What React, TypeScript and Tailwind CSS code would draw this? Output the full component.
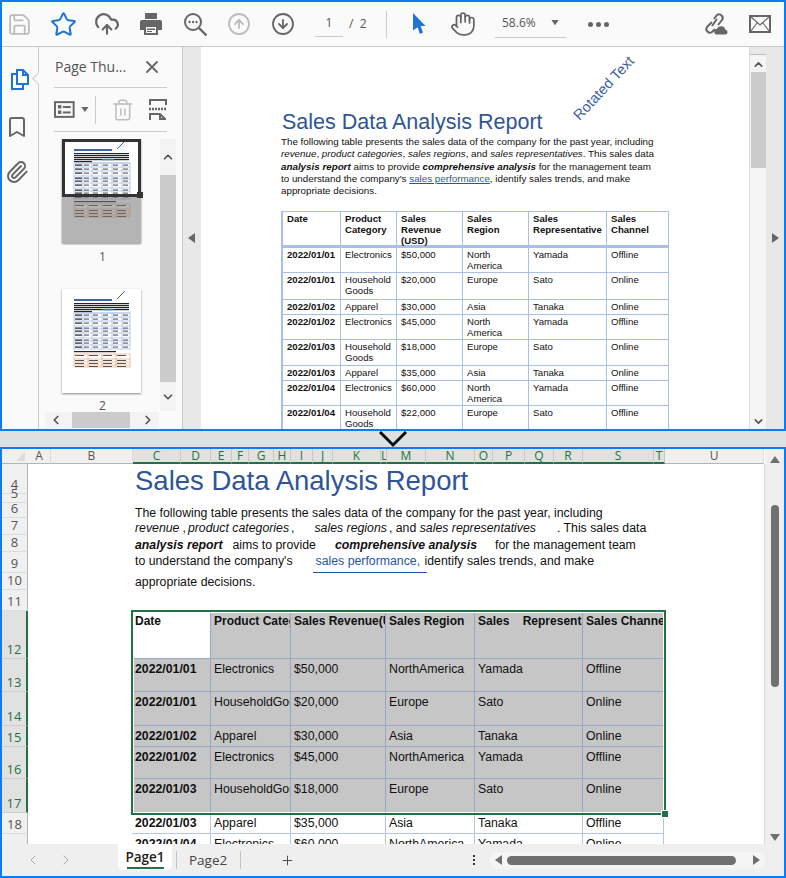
import type { ReactNode } from "react";
import {
  Bookmark,
  ChevronDown,
  ChevronLeft,
  ChevronRight,
  ChevronUp,
  CircleArrowDown,
  CircleArrowUp,
  CloudUpload,
  Hand,
  Paperclip,
  Plus,
  Save,
  Star,
  Trash2,
  X,
} from "lucide-react";

const pdfRows = [
  { h: "h-[25px]", d: "2022/01/01", c: "Electronics", r: "$50,000", g: "North\nAmerica", p: "Yamada", s: "Offline" },
  { h: "h-[27px]", d: "2022/01/01", c: "Household\nGoods", r: "$20,000", g: "Europe", p: "Sato", s: "Online" },
  { h: "h-[15px]", d: "2022/01/02", c: "Apparel", r: "$30,000", g: "Asia", p: "Tanaka", s: "Online" },
  { h: "h-[25px]", d: "2022/01/02", c: "Electronics", r: "$45,000", g: "North\nAmerica", p: "Yamada", s: "Offline" },
  { h: "h-[26px]", d: "2022/01/03", c: "Household\nGoods", r: "$18,000", g: "Europe", p: "Sato", s: "Online" },
  { h: "h-[15px]", d: "2022/01/03", c: "Apparel", r: "$35,000", g: "Asia", p: "Tanaka", s: "Online" },
  { h: "h-[25px]", d: "2022/01/04", c: "Electronics", r: "$60,000", g: "North\nAmerica", p: "Yamada", s: "Offline" },
  { h: "h-[27px]", d: "2022/01/04", c: "Household\nGoods", r: "$22,000", g: "Europe", p: "Sato", s: "Offline" },
];

const pdfCols = ["w-[58px]", "w-[56px]", "w-[66px]", "w-[66px]", "w-[78px]", "w-[63px]"];

const columns = [
  { n: "A", w: "w-[23px]", sel: false },
  { n: "B", w: "w-[82px]", sel: false },
  { n: "C", w: "w-[48px]", sel: true },
  { n: "D", w: "w-[30px]", sel: true },
  { n: "E", w: "w-[21px]", sel: true },
  { n: "F", w: "w-[17px]", sel: true },
  { n: "G", w: "w-[25px]", sel: true },
  { n: "H", w: "w-[17px]", sel: true },
  { n: "I", w: "w-[22px]", sel: true },
  { n: "J", w: "w-[20px]", sel: true },
  { n: "K", w: "w-[48px]", sel: true },
  { n: "L", w: "w-[6px]", sel: true },
  { n: "M", w: "w-[39px]", sel: true },
  { n: "N", w: "w-[49px]", sel: true },
  { n: "O", w: "w-[18px]", sel: true },
  { n: "P", w: "w-[32px]", sel: true },
  { n: "Q", w: "w-[29px]", sel: true },
  { n: "R", w: "w-[29px]", sel: true },
  { n: "S", w: "w-[71px]", sel: true },
  { n: "T", w: "w-[11px]", sel: true },
  { n: "U", w: "w-[99px]", sel: false },
];

const sheetCols = ["w-[79px]", "w-[80px]", "w-[95px]", "w-[89px]", "w-[108px]", "w-[81px]"];

function ToolSlot({ children, className = "" }: { children: ReactNode; className?: string }) {
  return <div className={`w-[44px] h-full flex items-center justify-center shrink-0 ${className}`}>{children}</div>;
}

function PrinterIcon() {
  return (
    <svg width="24" height="24" viewBox="0 0 24 24" fill="#666">
      <path d="M6 1h12v6H6z" />
      <path fillRule="evenodd" d="M3 8h18a2 2 0 0 1 2 2v8h-4v5H5v-5H1v-8a2 2 0 0 1 2-2zM7 15v6h10v-6zm1 1.5h8V18H8zm0 2.5h5v1H8z" />
    </svg>
  );
}

function ZoomDots() {
  return (
    <svg width="25" height="25" viewBox="0 0 25 25" fill="none" stroke="#666" strokeWidth="2">
      <circle cx="10" cy="10" r="8" />
      <path d="M16 16l7.5 7.5" strokeWidth="2.4" />
      <g fill="#666" stroke="none">
        <circle cx="6.5" cy="10" r="1.2" />
        <circle cx="10" cy="10" r="1.2" />
        <circle cx="13.5" cy="10" r="1.2" />
      </g>
    </svg>
  );
}

function CursorIcon() {
  return (
    <svg width="14" height="22" viewBox="0 0 14 22" fill="#1f74d2">
      <path d="M1 0l12.5 13H8.6l2.4 6.6-3 1.4-2.4-6.8L1 17.5z" />
    </svg>
  );
}

function LinkCloud() {
  return (
    <svg width="26" height="24" viewBox="0 0 26 24" fill="none" stroke="#666" strokeWidth="2">
      <path d="M9 10l-5 5a3.6 3.6 0 0 0 5 5l3-3" />
      <path d="M9 14l5-7" />
      <path d="M11 7l3-4a3.6 3.6 0 0 1 5 5l-4 5" />
      <path d="M13 22.5a3 3 0 0 1 1-5.8 4.5 4.5 0 0 1 8.4 1 2.5 2.5 0 0 1 .6 4.8z" fill="#666" stroke="none" />
    </svg>
  );
}

function MailIcon() {
  return (
    <svg width="22" height="18" viewBox="0 0 22 18" fill="none" stroke="#666">
      <rect x="1" y="1" width="20" height="16" strokeWidth="2" />
      <path d="M1.5 1.5L11 10l9.5-8.5M1.5 16.5L8 8M20.5 16.5L14 8" strokeWidth="1.2" />
    </svg>
  );
}

function PagesIcon() {
  return (
    <svg width="20" height="22" viewBox="0 0 20 22" fill="none" stroke="#1f74d2" strokeWidth="2">
      <path d="M7 2h6l5 5v9H7z" />
      <path d="M13 2v5h5" />
      <path d="M7 6H2v15h11v-5" />
    </svg>
  );
}

function ListOptions() {
  return (
    <svg width="21" height="17" viewBox="0 0 21 17" fill="none" stroke="#666" strokeWidth="2">
      <rect x="1" y="1" width="19" height="15" />
      <g fill="#666" stroke="none">
        <rect x="4" y="4" width="3.5" height="3.5" />
        <rect x="4" y="9.5" width="3.5" height="3.5" />
        <rect x="9" y="5" width="8" height="2" />
        <rect x="9" y="10.5" width="8" height="2" />
      </g>
    </svg>
  );
}

function ExtractIcon() {
  return (
    <svg width="18" height="22" viewBox="0 0 18 22" fill="none" stroke="#666" strokeWidth="2">
      <path d="M1 6V1h16v5" />
      <path d="M0 10h18" strokeDasharray="2 1" strokeWidth="2.5" />
      <path d="M1 21v-6h10l5 5v1M11 15v5h5" />
    </svg>
  );
}

function Triangle({ dir, className = "" }: { dir: "l" | "r" | "u" | "d"; className?: string }) {
  const points = {
    l: "7,0 7,10 0,5",
    r: "0,0 0,10 7,5",
    u: "0,7 10,7 5,0",
    d: "0,0 10,0 5,7",
  }[dir];
  const size = dir === "l" || dir === "r" ? { w: 7, h: 10 } : { w: 10, h: 7 };
  return (
    <svg width={size.w} height={size.h} viewBox={`0 0 ${size.w} ${size.h}`} className={className}>
      <polygon points={points} fill="currentColor" />
    </svg>
  );
}

function Toolbar() {
  return (
    <div className="h-[45px] shrink-0 bg-[#fafafa] border-b border-[#c8c8c8] flex items-center">
      <ToolSlot className="-ml-[5px]">
        <Save size={25} strokeWidth={1.7} className="text-[#bcbcbc]" />
      </ToolSlot>
      <ToolSlot>
        <Star size={27} strokeWidth={1.8} className="text-[#1f74d2]" />
      </ToolSlot>
      <ToolSlot>
        <CloudUpload size={26} strokeWidth={2} className="text-[#666]" />
      </ToolSlot>
      <ToolSlot>
        <PrinterIcon />
      </ToolSlot>
      <ToolSlot>
        <ZoomDots />
      </ToolSlot>
      <ToolSlot>
        <CircleArrowUp size={24} strokeWidth={1.8} className="text-[#bcbcbc]" />
      </ToolSlot>
      <ToolSlot>
        <CircleArrowDown size={24} strokeWidth={1.8} className="text-[#666]" />
      </ToolSlot>
      <div className="ml-[10px] w-[28px] h-[21px] mt-[4px] border-b border-[#c8c8c8] text-center text-[12px] leading-[14px] text-[#555]">
        1
      </div>
      <div className="ml-[6px] w-[37px] text-[12px] text-[#555] whitespace-pre">/  2</div>
      <div className="w-px h-[27px] bg-[#ccc]" />
      <ToolSlot className="ml-[10px]">
        <CursorIcon />
      </ToolSlot>
      <ToolSlot>
        <Hand size={26} strokeWidth={1.6} className="text-[#666]" />
      </ToolSlot>
      <div className="ml-[10px] w-[71px] h-[25px] mt-[2px] pb-[4px] border-b border-[#c8c8c8] flex items-center justify-between pl-[7px] pr-[6px] text-[12px] text-[#555]">
        <span>58.6%</span>
        <Triangle dir="d" className="text-[#666] scale-75" />
      </div>
      <ToolSlot className="ml-[10px]">
        <div className="flex gap-[3px]">
          <div className="w-[5px] h-[5px] rounded-full bg-[#666]" />
          <div className="w-[5px] h-[5px] rounded-full bg-[#666]" />
          <div className="w-[5px] h-[5px] rounded-full bg-[#666]" />
        </div>
      </ToolSlot>
      <ToolSlot className="ml-auto">
        <LinkCloud />
      </ToolSlot>
      <ToolSlot className="mr-[2px]">
        <MailIcon />
      </ToolSlot>
    </div>
  );
}

function Rail() {
  return (
    <div className="w-[37px] shrink-0 bg-[#fafafa] border-r border-[#c8c8c8] relative flex flex-col items-center pt-[21px]">
      <PagesIcon />
      <Bookmark size={24} strokeWidth={2} className="text-[#666] mt-[25px] -ml-[6px]" />
      <Paperclip size={24} strokeWidth={2} className="text-[#666] mt-[21px] -ml-[6px]" />
      <div className="absolute right-[-5px] top-[27px] w-[9px] h-[9px] rotate-45 bg-[#fafafa] border-l border-b border-[#c8c8c8]" />
    </div>
  );
}

function ThumbArt() {
  const rowY = [0, 4, 8, 13, 16, 20, 25, 28, 32];
  const colX = [12, 21, 30, 40, 50, 60];
  return (
    <svg width="79" height="104" viewBox="0 0 79 104">
      <rect x="12" y="10" width="38" height="2" fill="#3f63a8" />
      <path d="M55 10l8-8" stroke="#3f63a8" strokeWidth="1" />
      {[14, 16, 18, 20, 22].map((y) => (
        <rect key={y} x="12" y={y} width={y === 22 ? 18 : 55} height="1.2" fill="#222" />
      ))}
      <rect x="40" y="20" width="12" height="1.2" fill="#1f74d2" />
      <g stroke="#a9bfe6" strokeWidth="0.8" fill="none">
        <rect x="12" y="24" width="56" height="36" />
        {rowY.map((y) => (
          <path key={y} d={`M12 ${24 + y}h56`} />
        ))}
        <path d="M21 24v36M30 24v36M40 24v36M50 24v36M60 24v36" />
      </g>
      {rowY.map((y) =>
        colX.map((x, i) => (
          <rect key={`${x}-${y}`} x={x + 1} y={25.5 + y} width={i === 0 ? 7 : 5} height="1.2" fill={i === 0 ? "#222" : "#666"} />
        )),
      )}
      <rect x="12" y="62" width="42" height="1.2" fill="#222" />
      <g stroke="#eab48e" strokeWidth="0.8" fill="none">
        <rect x="12" y="65" width="56" height="13" />
        <path d="M12 70h56M12 73h56M12 76h56M26 65v13M40 65v13M54 65v13" />
      </g>
      {[66, 71, 74, 77].map((y) =>
        [13, 27, 41, 55].map((x) => <rect key={`${x}-${y}`} x={x} y={y} width="9" height="1" fill="#555" />),
      )}
    </svg>
  );
}

function ThumbnailPanel() {
  return (
    <div className="w-[144px] shrink-0 bg-[#fafafa] border-r border-[#c8c8c8] flex flex-col font-['Open_Sans',sans-serif]">
      <div className="mx-[15px] h-[41px] shrink-0 border-b border-[#ccc] flex items-center justify-between pr-[5px]">
        <span className="text-[14px] text-[#555] -mt-[1px] ml-[1px]">Page Thu...</span>
        <X size={20} strokeWidth={2.2} className="text-[#666]" />
      </div>
      <div className="mx-[15px] h-[44px] shrink-0 border-b border-[#ccc] flex items-center">
        <ListOptions />
        <Triangle dir="d" className="ml-[5px] text-[#666] scale-75" />
        <div className="ml-[6px] w-px h-[28px] bg-[#ccc]" />
        <Trash2 size={24} strokeWidth={1.5} className="ml-[15px] text-[#bcbcbc]" />
        <div className="ml-[14px]">
          <ExtractIcon />
        </div>
      </div>
      <div className="flex-1 min-h-0 flex flex-col pt-[7px]">
        <div className="h-[273px] shrink-0 flex pl-[6px] overflow-hidden">
          <div className="w-[115px] flex flex-col items-center">
            <div className="relative -ml-[2px] bg-white shadow-[0_1px_2px_#888]">
              <ThumbArt />
              <div className="absolute inset-x-0 bottom-0 top-[56px] bg-[#777]/55" />
              <div className="absolute left-0 top-0 w-full h-[58px] border-[3px] border-[#333]" />
              <div className="absolute right-[-2px] top-[53px] w-[6px] h-[6px] bg-[#333]" />
            </div>
            <div className="mt-[7px] text-[12px] leading-[14px] text-[#555]">1</div>
            <div className="mt-[25px] -ml-[2px] bg-white shadow-[0_1px_2px_#888]">
              <ThumbArt />
            </div>
            <div className="mt-[6px] text-[12px] leading-[14px] text-[#555]">2</div>
          </div>
          <div className="w-[16px] h-[272px] flex flex-col bg-[#f3f3f3] shrink-0">
            <div className="h-[36px] flex items-center justify-center">
              <ChevronUp size={14} strokeWidth={3} className="text-[#555]" />
            </div>
            <div className="h-[207px] bg-[#cbcbcb]" />
            <div className="flex-1 flex items-center justify-center">
              <ChevronDown size={14} strokeWidth={3} className="text-[#555]" />
            </div>
          </div>
        </div>
        <div className="ml-[6px] w-[114px] h-[16px] shrink-0 bg-[#f3f3f3] flex items-center justify-between px-[4px] relative">
          <ChevronLeft size={14} strokeWidth={3} className="text-[#555]" />
          <div className="absolute left-[27px] top-0 w-[58px] h-full bg-[#cbcbcb]" />
          <ChevronRight size={14} strokeWidth={3} className="text-[#555]" />
        </div>
      </div>
    </div>
  );
}

function PdfTable() {
  return (
    <div className="w-[388px] border-l-2 border-t border-r border-[#aabfe6] text-[9.6px] leading-[11px] text-[#111]">
      <div className="flex h-[36px] font-bold border-b-[3px] border-[#aabfe6]">
        {["Date", "Product\nCategory", "Sales\nRevenue\n(USD)", "Sales\nRegion", "Sales\nRepresentative", "Sales\nChannel"].map(
          (t, i) => (
            <div
              key={t}
              className={`${pdfCols[i]} shrink-0 pl-[4px] pt-[1px] whitespace-pre-line border-r border-[#aabfe6] last:border-r-0`}
            >
              {t}
            </div>
          ),
        )}
      </div>
      {pdfRows.map((row, i) => (
        <div key={i} className={`flex ${row.h} border-b border-[#aabfe6]`}>
          {[row.d, row.c, row.r, row.g, row.p, row.s].map((t, j) => (
            <div
              key={j}
              className={`${pdfCols[j]} shrink-0 pl-[4px] pt-[1px] whitespace-pre-line border-r border-[#aabfe6] last:border-r-0 ${j === 0 ? "font-bold" : ""}`}
            >
              {t}
            </div>
          ))}
        </div>
      ))}
    </div>
  );
}

function PdfPage() {
  return (
    <div className="flex-1 min-w-0 bg-white overflow-hidden relative pl-[80px] pt-[62px] font-['Liberation_Sans',Arial,sans-serif]">
      <div className="ml-[1px] text-[21.5px] leading-[27px] text-[#2f5597] whitespace-nowrap">Sales Data Analysis Report</div>
      <div className="text-[9.8px] leading-[12.3px] text-[#111] whitespace-nowrap">
        <div>The following table presents the sales data of the company for the past year, including</div>
        <div>
          <i>revenue</i>, <i>product categories</i>, <i>sales regions</i>, and <i>sales representatives</i>. This sales data
        </div>
        <div>
          <b>
            <i>analysis report</i>
          </b>{" "}
          aims to provide{" "}
          <b>
            <i>comprehensive analysis</i>
          </b>{" "}
          for the management team
        </div>
        <div>
          to understand the company's <span className="text-[#1f55b5] underline">sales performance</span>, identify sales
          trends, and make
        </div>
        <div>appropriate decisions.</div>
      </div>
      <div className="mt-[14px]">
        <PdfTable />
      </div>
      <div className="absolute left-[362px] top-[33px] -rotate-[47deg] text-[14.5px] leading-[16px] text-[#3b5ea6] whitespace-nowrap">
        Rotated Text
      </div>
    </div>
  );
}

function PdfWindow() {
  return (
    <div className="h-[431px] shrink-0 border-2 border-[#0a7cf5] bg-white flex flex-col font-['Open_Sans',sans-serif]">
      <Toolbar />
      <div className="flex-1 min-h-0 flex">
        <Rail />
        <ThumbnailPanel />
        <div className="w-[18px] shrink-0 bg-[#e8e8e8] flex items-center justify-center">
          <Triangle dir="l" className="text-[#666] -ml-[1px]" />
        </div>
        <PdfPage />
        <div className="w-[17px] shrink-0 bg-[#f5f5f5] border-l border-[#ddd] flex flex-col items-center">
          <div className="w-full h-[8px] border-b border-[#bbb] bg-[#e8e8e8]" />
          <div className="h-[16px] mt-[1px] flex items-center">
            <ChevronUp size={13} strokeWidth={3} className="text-[#555]" />
          </div>
          <div className="w-[15px] h-[96px] bg-[#cbcbcb]" />
          <div className="mt-auto h-[16px] flex items-center">
            <ChevronDown size={13} strokeWidth={3} className="text-[#555]" />
          </div>
        </div>
        <div className="w-[18px] shrink-0 bg-[#e8e8e8] flex items-center justify-center">
          <Triangle dir="r" className="text-[#666] ml-[1px]" />
        </div>
      </div>
    </div>
  );
}

function SheetRow({
  n,
  h,
  sel = false,
  children,
}: {
  n: number;
  h: string;
  sel?: boolean;
  children?: ReactNode;
}) {
  return (
    <div className={`flex ${h} shrink-0`}>
      <div
        className={`w-[26px] shrink-0 flex items-end justify-center text-[13px] leading-[17px] border-b font-['Open_Sans',sans-serif] ${
          sel
            ? "bg-[#e1e1e1] text-[#217346] border-[#cfcfcf] border-r-2 border-r-[#217346]"
            : "bg-[#f0f0f0] text-[#555] border-[#dcdcdc] border-r border-r-[#b4b4b4]"
        }`}
      >
        {n}
      </div>
      <div className="flex-1 min-w-0 pl-[107px] whitespace-nowrap">{children}</div>
    </div>
  );
}

function TableCells({ cells, selected, first = false }: { cells: string[]; selected: boolean; first?: boolean }) {
  return (
    <div className={`flex h-full -ml-[3px] w-[533px] leading-[14px] text-[#111] ${first ? "text-[12px]" : "text-[12.3px]"}`}>
      {cells.map((t, i) => (
        <div
          key={i}
          className={`${sheetCols[i]} shrink-0 overflow-hidden whitespace-pre pl-[3px] pt-[3px] border-b border-r ${
            selected ? "border-[#95a8c8]" : "border-[#b4c6e7]"
          } ${selected && !(first && i === 0) ? "bg-[#c6c6c6]" : "bg-white"} ${first || i === 0 ? "font-bold" : ""}`}
        >
          {t}
        </div>
      ))}
    </div>
  );
}

function SheetWindow() {
  const line = "text-[12.3px] leading-[16px] text-[#111] flex items-end h-full";
  return (
    <div className="flex-1 min-h-0 border-2 border-[#0a7cf5] bg-[#efefef] flex flex-col font-['Liberation_Sans',Arial,sans-serif]">
      <div className="flex-1 min-h-0 flex">
        <div className="w-[763px] shrink-0 flex flex-col relative overflow-hidden bg-white">
          <div className="h-[15px] shrink-0 flex text-[12px] leading-[14px] font-['Open_Sans',sans-serif]">
            <div className="w-[26px] shrink-0 bg-[#f0f0f0] border-b border-[#b4b4b4] relative">
              <div className="absolute right-[3px] bottom-[2px] w-0 h-0 border-l-[9px] border-l-transparent border-b-[9px] border-b-[#dcdcdc]" />
            </div>
            {columns.map((c) => (
              <div
                key={c.n}
                className={`${c.w} shrink-0 overflow-hidden text-center ${
                  c.sel
                    ? "bg-[#e1e1e1] text-[#217346] border-b-2 border-[#217346] border-r border-r-[#c8c8c8]"
                    : "bg-[#f0f0f0] text-[#555] border-b border-[#b4b4b4] border-r border-r-[#dcdcdc]"
                }`}
              >
                {c.n}
              </div>
            ))}
          </div>
          <div className="flex-1 min-h-0 overflow-hidden flex flex-col border-r border-[#d8d8d8]">
            <SheetRow n={4} h="h-[30px]">
              <div className="text-[27.5px] leading-[30px] text-[#2f5597] h-full flex items-end translate-y-[2px]">
                Sales Data Analysis Report
              </div>
            </SheetRow>
            <SheetRow n={5} h="h-[9px]" />
            <SheetRow n={6} h="h-[15px]">
              <div className={`${line} translate-y-[3px]`}>
                The following table presents the sales data of the company for the past year, including
              </div>
            </SheetRow>
            <SheetRow n={7} h="h-[17px]">
              <div className={`${line} translate-y-[1px]`}>
                <i>revenue</i>
                <span className="ml-[3px]">,</span>
                <i className="ml-[2px]">product categories</i>
                <span className="ml-[2px]">,</span>
                <i className="ml-[20px]">sales regions</i>
                <span className="ml-[2px] whitespace-pre">, and </span>
                <i>sales representatives</i>
                <span className="ml-[21px]">. This sales data</span>
              </div>
            </SheetRow>
            <SheetRow n={8} h="h-[17px]">
              <div className={`${line} translate-y-[1px]`}>
                <b>
                  <i>analysis report</i>
                </b>
                <span className="ml-[10px]">aims to provide</span>
                <b className="ml-[19px]">
                  <i>comprehensive analysis</i>
                </b>
                <span className="ml-[18px]">for the management team</span>
              </div>
            </SheetRow>
            <SheetRow n={9} h="h-[21px]">
              <div className="text-[12.3px] leading-[16px] text-[#111] flex h-full items-start pt-[1px]">
                <span>to understand the company's</span>
                <span className="ml-[20px] pl-[3px] pr-[7px] h-[20px] border-b border-[#1f55b5] text-[#1f55b5]">
                  sales performance,
                </span>
                <span className="-ml-[6px] whitespace-pre"> identify sales trends, and make</span>
              </div>
            </SheetRow>
            <SheetRow n={10} h="h-[17px]">
              <div className={line}>appropriate decisions.</div>
            </SheetRow>
            <SheetRow n={11} h="h-[21px]" />
            <SheetRow n={12} h="h-[48px]" sel>
              <TableCells
                selected
                first
                cells={["Date", "Product Category", "Sales Revenue(USD)", "Sales Region", "Sales    Representative", "Sales Channel"]}
              />
            </SheetRow>
            <SheetRow n={13} h="h-[33px]" sel>
              <TableCells selected cells={["2022/01/01", "Electronics", "$50,000", "NorthAmerica", "Yamada", "Offline"]} />
            </SheetRow>
            <SheetRow n={14} h="h-[34px]" sel>
              <TableCells selected cells={["2022/01/01", "HouseholdGoods", "$20,000", "Europe", "Sato", "Online"]} />
            </SheetRow>
            <SheetRow n={15} h="h-[21px]" sel>
              <TableCells selected cells={["2022/01/02", "Apparel", "$30,000", "Asia", "Tanaka", "Online"]} />
            </SheetRow>
            <SheetRow n={16} h="h-[32px]" sel>
              <TableCells selected cells={["2022/01/02", "Electronics", "$45,000", "NorthAmerica", "Yamada", "Offline"]} />
            </SheetRow>
            <SheetRow n={17} h="h-[34px]" sel>
              <TableCells selected cells={["2022/01/03", "HouseholdGoods", "$18,000", "Europe", "Sato", "Online"]} />
            </SheetRow>
            <SheetRow n={18} h="h-[21px]">
              <TableCells selected={false} cells={["2022/01/03", "Apparel", "$35,000", "Asia", "Tanaka", "Offline"]} />
            </SheetRow>
            <SheetRow n={19} h="h-[33px]">
              <TableCells selected={false} cells={["2022/01/04", "Electronics", "$60,000", "NorthAmerica", "Yamada", "Online"]} />
            </SheetRow>
          </div>
          {/* selection frame over the cells */}
          <div className="absolute left-[129px] top-[161px] w-[535px] h-[205px] border-2 border-[#217346] shadow-[inset_0_0_0_1px_#fff]">
            <div className="absolute right-[-4px] bottom-[-4px] w-[6px] h-[6px] bg-[#217346] outline outline-1 outline-white" />
          </div>
        </div>
        <div className="flex-1 flex flex-col items-center pt-[7px] pb-[3px] text-[#707070]">
          <Triangle dir="u" />
          <div className="mt-[42px] w-[8px] h-[182px] rounded-full bg-[#707070]" />
          <Triangle dir="d" className="mt-auto" />
        </div>
      </div>
      <div className="h-[32px] shrink-0 flex items-center text-[13.5px] leading-[18px] font-['Open_Sans',sans-serif] text-[#444]">
        <ChevronLeft size={16} strokeWidth={1.5} className="ml-[23px] text-[#aaa]" />
        <ChevronRight size={16} strokeWidth={1.5} className="ml-[17px] text-[#aaa]" />
        <div className="ml-[44px] w-[54px] h-[26px] -mt-[6px] bg-white rounded-b-[5px] flex flex-col items-center justify-end font-semibold">
          <span className="text-[#222]">Page1</span>
          <div className="w-[37px] h-[2px] mt-[1px] mb-[1px] bg-[#217346]" />
        </div>
        <div className="ml-[4px] w-px h-[18px] bg-[#c4c4c4]" />
        <span className="ml-[12px]">Page2</span>
        <div className="ml-[13px] w-px h-[18px] bg-[#c4c4c4]" />
        <Plus size={15} strokeWidth={1.5} className="ml-[39px] text-[#444]" />
        <div className="ml-[178px] flex flex-col gap-[2px]">
          <div className="w-[2px] h-[2px] bg-[#333]" />
          <div className="w-[2px] h-[2px] bg-[#333]" />
          <div className="w-[2px] h-[2px] bg-[#333]" />
        </div>
        <div className="ml-[15px] w-[275px] h-[17px] rounded-full bg-[#f5f5f5] flex items-center px-[5px] text-[#707070]">
          <Triangle dir="l" />
          <div className="ml-[5px] w-[229px] h-[9px] rounded-full bg-[#707070]" />
          <Triangle dir="r" className="ml-auto" />
        </div>
      </div>
    </div>
  );
}

export default function App() {
  return (
    <div className="w-[786px] h-[878px] overflow-hidden relative flex flex-col bg-[#e0e0e0]">
      <PdfWindow />
      <div className="h-[16px] shrink-0" />
      <SheetWindow />
      <svg className="absolute left-[378px] top-[430px]" width="30" height="18" viewBox="0 0 30 18" fill="none">
        <path d="M2 2l13 13L28 2" stroke="#111" strokeWidth="3" />
      </svg>
    </div>
  );
}
